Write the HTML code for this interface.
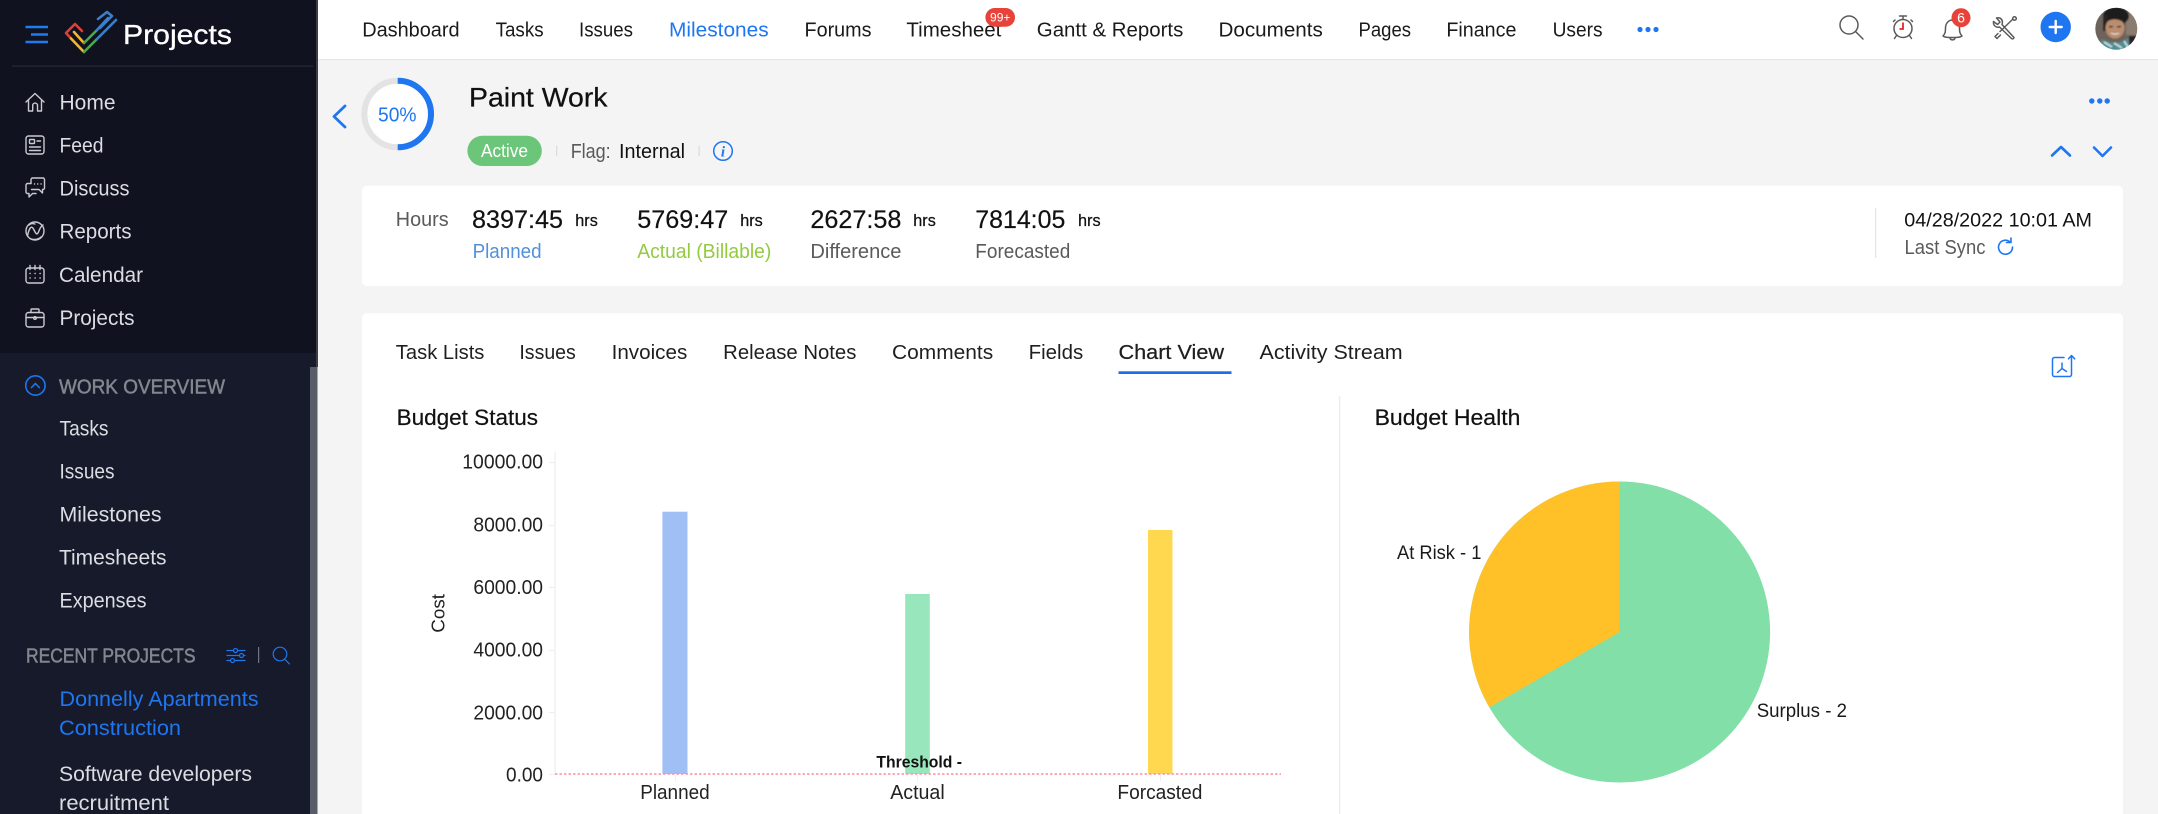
<!DOCTYPE html>
<html lang="en">
<head>
<meta charset="utf-8">
<title>Projects - Paint Work</title>
<style>
html,body{margin:0;padding:0;width:2158px;height:814px;overflow:hidden;background:#f4f4f4}
svg{display:block}
text{font-family:"Liberation Sans",sans-serif;white-space:pre}
.side{font-size:21px;fill:#dcdde2}
.sec{font-size:20px;fill:#84868f;stroke:#84868f;stroke-width:.5}
.nav{font-size:20px;fill:#1a1a1a}
.tab{font-size:20px;fill:#1f1f1f}
.num{font-size:25px;fill:#111;stroke:#111;stroke-width:.2}
.hrs{font-size:17px;fill:#111;stroke:#111;stroke-width:.25}
.lbl{font-size:20px;fill:#5a5a5a}
.ax{font-size:20px;fill:#222}
.h2{font-size:22px;fill:#111;stroke:#111;stroke-width:.2}
.ic{fill:none;stroke:#c9cad0;stroke-width:1.4;stroke-linecap:round;stroke-linejoin:round}
.bl{fill:none;stroke:#1e76f0;stroke-linecap:round;stroke-linejoin:round}
.gr{fill:none;stroke:#5a5a5a;stroke-width:1.5;stroke-linecap:round;stroke-linejoin:round}
</style>
</head>
<body>
<svg width="2158" height="814" viewBox="0 0 2158 814" xmlns="http://www.w3.org/2000/svg">
<defs>
<clipPath id="av"><circle cx="2116.3" cy="28.7" r="21"/></clipPath>
<filter id="soft" x="-10%" y="-10%" width="120%" height="120%"><feGaussianBlur stdDeviation=".9"/></filter>
</defs>
<rect width="2158" height="814" fill="#f4f4f4"/>

<!-- sidebar -->
<rect x="0" y="0" width="317" height="353" fill="#11121f"/>
<rect x="0" y="353" width="317" height="461" fill="#161a2b"/>
<rect x="12" y="65.5" width="301" height="1.2" fill="#2a2b37"/>
<rect x="316" y="0" width="2" height="367" fill="#3c3d48"/>
<rect x="310" y="367" width="7.5" height="447" fill="#585c68"/>

<!-- hamburger -->
<g stroke="#1e7cf0" stroke-width="2.6">
<line x1="25.5" y1="27" x2="48" y2="27"/>
<line x1="31" y1="34.5" x2="48" y2="34.5"/>
<line x1="25.5" y1="42" x2="48" y2="42"/>
</g>
<!-- logo -->
<g fill="none" stroke-width="2.6" stroke-linejoin="round" stroke-linecap="round">
<path d="M75 24 66 33 71 38.5M75 24 82 31" stroke="#d9413a"/>
<path d="M71 38.5 84 52M74 32 84 43" stroke="#f5b52c"/>
<path d="M84 52 97 39M84 43 97 30" stroke="#4aa84f"/>
<path d="M97 39 116 20M97 30 108 18M98 19 107 12 112 16 100 28" stroke="#3a7fc8"/>
</g>
<text x="123" y="44" font-size="28" fill="#fff" stroke="#fff" stroke-width=".3" textLength="109" lengthAdjust="spacingAndGlyphs">Projects</text>

<!-- sidebar icons -->
<g class="ic">
<path d="M26 102 35 93.5 44 102M28.5 100V111H32.7V105.5a2.4 2.4 0 0 1 4.8 0V111H41.5V100"/>
<rect x="26" y="136" width="18" height="18" rx="2.5"/>
<rect x="29.5" y="139.5" width="5" height="4" rx=".5"/>
<path d="M29.5 147H40.5M29.5 150.5H40.5M37 141H40.5"/>
<path d="M31 183.5V179.5a1.5 1.5 0 0 1 1.5-1.5H43a1.5 1.5 0 0 1 1.5 1.5V188a1.5 1.5 0 0 1-1.5 1.5h-.5V193l-3.5-3.5H31.5"/>
<path d="M31 183.5H27.5a1.5 1.5 0 0 0-1.5 1.5V192a1.5 1.5 0 0 0 1.5 1.5H29V197l3.5-3.5H36"/>
<path d="M34.5 184h.1M37.7 184h.1M41 184h.1"/>
<circle cx="35" cy="231" r="9"/>
<path d="M27.5 236C29 228 31.5 225 33.5 229S37 236 38.5 232 41 226 43 225M29 225C31 223 33 223.5 35 224M30 238.5C33 240 38 240 41 237"/>
<rect x="26" y="268" width="18" height="15" rx="2.5"/>
<path d="M30 265.5V269.5M35 265.5V269.5M40 265.5V269.5"/>
<path d="M30 273.5h.2M35 273.5h.2M40 273.5h.2M30 278h.2M35 278h.2M40 278h.2"/>
<rect x="26" y="312.5" width="18" height="14.5" rx="2.5"/>
<path d="M31 312.5V310a1 1 0 0 1 1-1h6a1 1 0 0 1 1 1v2.5M26 317.5H44"/>
<circle cx="35" cy="318" r="1.3"/>
</g>

<!-- sidebar text -->
<text class="side" x="59.5" y="109.5" textLength="56" lengthAdjust="spacingAndGlyphs">Home</text>
<text class="side" x="59.5" y="152.5" textLength="44" lengthAdjust="spacingAndGlyphs">Feed</text>
<text class="side" x="59.5" y="195.5" textLength="70" lengthAdjust="spacingAndGlyphs">Discuss</text>
<text class="side" x="59.5" y="238.5" textLength="72" lengthAdjust="spacingAndGlyphs">Reports</text>
<text class="side" x="59" y="281.8" textLength="84" lengthAdjust="spacingAndGlyphs">Calendar</text>
<text class="side" x="59.5" y="324.8" textLength="75" lengthAdjust="spacingAndGlyphs">Projects</text>

<circle cx="35.4" cy="385.5" r="9.7" fill="none" stroke="#1e76f0" stroke-width="1.6"/>
<path class="bl" stroke-width="1.6" d="M31.5 387.5 35.4 383.5 39.3 387.5"/>
<text class="sec" x="59" y="393.5" textLength="166" lengthAdjust="spacingAndGlyphs">WORK OVERVIEW</text>

<text class="side" x="59.5" y="435.5" textLength="49" lengthAdjust="spacingAndGlyphs">Tasks</text>
<text class="side" x="59.5" y="478.5" textLength="55" lengthAdjust="spacingAndGlyphs">Issues</text>
<text class="side" x="59.5" y="521.5" textLength="102" lengthAdjust="spacingAndGlyphs">Milestones</text>
<text class="side" x="59" y="564.5" textLength="107.5" lengthAdjust="spacingAndGlyphs">Timesheets</text>
<text class="side" x="59.5" y="607.5" textLength="87" lengthAdjust="spacingAndGlyphs">Expenses</text>

<text class="sec" x="26" y="662.5" textLength="169.5" lengthAdjust="spacingAndGlyphs">RECENT PROJECTS</text>
<g class="bl" stroke-width="1.2">
<path d="M227 650.5H233M238 650.5H245M227 655.5H239M244 655.5H245M227 660.5H230M235 660.5H245"/>
<circle cx="235.5" cy="650.5" r="2"/>
<circle cx="241.5" cy="655.5" r="2"/>
<circle cx="232.5" cy="660.5" r="2"/>
<circle cx="280" cy="654" r="6.8"/>
<path d="M285 659.5 289.5 664"/>
</g>
<rect x="258" y="647" width="1.2" height="16" fill="#6f7480"/>

<text class="side" x="59.5" y="706.2" style="fill:#1e76f0" textLength="199" lengthAdjust="spacingAndGlyphs">Donnelly Apartments</text>
<text class="side" x="59" y="735.2" style="fill:#1e76f0" textLength="122" lengthAdjust="spacingAndGlyphs">Construction</text>
<text class="side" x="59" y="781.2" textLength="193" lengthAdjust="spacingAndGlyphs">Software developers</text>
<text class="side" x="59" y="810.2" textLength="110" lengthAdjust="spacingAndGlyphs">recruitment</text>

<!-- header -->
<rect x="318" y="0" width="1840" height="59" fill="#fff"/>
<rect x="318" y="59" width="1840" height="1.2" fill="#e6e6e6"/>
<text class="nav" x="362.2" y="36.7" textLength="97.4" lengthAdjust="spacingAndGlyphs">Dashboard</text>
<text class="nav" x="495.6" y="36.7" textLength="48" lengthAdjust="spacingAndGlyphs">Tasks</text>
<text class="nav" x="579" y="36.7" textLength="54" lengthAdjust="spacingAndGlyphs">Issues</text>
<text class="nav" x="669" y="36.7" style="fill:#1e76f0" textLength="99.7" lengthAdjust="spacingAndGlyphs">Milestones</text>
<text class="nav" x="804.5" y="36.7" textLength="67" lengthAdjust="spacingAndGlyphs">Forums</text>
<text class="nav" x="906.4" y="36.7" textLength="95" lengthAdjust="spacingAndGlyphs">Timesheet</text>
<text class="nav" x="1036.8" y="36.7" textLength="146.5" lengthAdjust="spacingAndGlyphs">Gantt &amp; Reports</text>
<text class="nav" x="1218.5" y="36.7" textLength="104.3" lengthAdjust="spacingAndGlyphs">Documents</text>
<text class="nav" x="1358.5" y="36.7" textLength="52.5" lengthAdjust="spacingAndGlyphs">Pages</text>
<text class="nav" x="1446.4" y="36.7" textLength="70" lengthAdjust="spacingAndGlyphs">Finance</text>
<text class="nav" x="1552.6" y="36.7" textLength="50" lengthAdjust="spacingAndGlyphs">Users</text>
<g fill="#1e76f0"><circle cx="1640" cy="29.5" r="2.6"/><circle cx="1648" cy="29.5" r="2.6"/><circle cx="1656" cy="29.5" r="2.6"/></g>
<rect x="985.4" y="8" width="29.6" height="18.7" rx="9.3" fill="#e8433a"/>
<text x="1000.2" y="21.5" font-size="12" fill="#fff" text-anchor="middle">99+</text>

<!-- header icons -->
<g class="gr">
<circle cx="1849" cy="25" r="9"/>
<path d="M1855.5 31.5 1863 39"/>
<circle cx="1903" cy="28.5" r="9"/>
<path d="M1903 19.5V16.5M1899.5 16H1906.5M1895 20 1893.5 21.5M1911 20 1912.5 21.5M1896.5 35.5 1894.5 38.5M1909.5 35.5 1911.5 38.5"/>
<path d="M1950 37.5C1945 37.5 1943 36 1943 36C1945.5 33.5 1945.5 31 1945.5 28C1945.5 23.5 1948.5 20 1952.5 20S1959.5 23.5 1959.5 28C1959.5 31 1959.5 33.5 1962 36C1962 36 1960 37.5 1955 37.5Z"/>
<path d="M1950 38a2.6 2.6 0 0 0 5 0"/>
<path d="M2002 24.5 2014 37.5a1.5 1.5 0 0 1-2.5 1L1999.5 27C1996 28 1993 25.5 1993.5 21.5L1997.5 24.5 2000 22 1996.5 18C2000.5 17 2003.5 20 2002 24.5Z"/>
<path d="M2013 19 2000 31.5M1998 33.5 1995 36.5l2 2 3.5-3.5"/>
<circle cx="2014.5" cy="18.5" r="1.8"/>
</g>
<path d="M1903 22.5V29H1899.5" fill="none" stroke="#e8262a" stroke-width="1.8"/>
<circle cx="1961" cy="17.7" r="9.5" fill="#e8433a"/>
<text x="1961" y="22.7" font-size="14" fill="#fff" text-anchor="middle">6</text>
<circle cx="2055.7" cy="27" r="15.2" fill="#1e76f0"/>
<path d="M2055.7 21V33M2049.7 27H2061.7" stroke="#fff" stroke-width="2.4" stroke-linecap="round"/>
<!-- avatar -->
<g clip-path="url(#av)">
<g filter="url(#soft)">
<rect x="2093" y="5" width="47" height="47" fill="#6d635c"/>
<rect x="2126" y="5" width="14" height="30" fill="#8a7c6e"/>
<ellipse cx="2116" cy="16" rx="13" ry="9" fill="#1f1b1a"/>
<rect x="2103" y="15" width="6" height="16" fill="#2a2422"/>
<ellipse cx="2115" cy="28" rx="9.5" ry="10.5" fill="#b98d6e"/>
<path d="M2106 23C2110 18 2120 18 2125 24L2124 15 2108 14Z" fill="#1f1b1a"/>
<rect x="2109" y="26" width="4" height="1.4" fill="#2a1f1a"/>
<rect x="2117" y="26" width="4" height="1.4" fill="#2a1f1a"/>
<path d="M2111 33C2113 34.5 2117 34.5 2119 33" stroke="#eee" stroke-width="1" fill="none"/>
<path d="M2098 52 2102 39C2108 43 2120 45 2128 38L2134 52Z" fill="#4f8d93"/>
<path d="M2104 42 2112 47M2114 43 2122 48M2124 41 2128 47" stroke="#cfe3e3" stroke-width="1.8" fill="none"/>
<rect x="2129" y="36" width="11" height="16" fill="#2a2220"/>
</g>
</g>

<!-- title row -->
<path class="bl" stroke-width="2.8" d="M345 106 334 116.5 345 127"/>
<circle cx="397.7" cy="114" r="33.3" fill="#fff" stroke="#e3e3e3" stroke-width="6"/>
<path d="M397.7 80.7A33.3 33.3 0 0 1 397.7 147.3" fill="none" stroke="#1e76f0" stroke-width="6"/>
<text x="378" y="121.5" font-size="20" fill="#1e76f0" textLength="38.5" lengthAdjust="spacingAndGlyphs">50%</text>
<text x="469" y="106.7" font-size="27" fill="#111" stroke="#111" stroke-width=".25" textLength="138.5" lengthAdjust="spacingAndGlyphs">Paint Work</text>
<rect x="467.4" y="135.7" width="74.4" height="30.3" rx="15.1" fill="#6cc679"/>
<text x="481" y="157" font-size="18" fill="#fff" textLength="47" lengthAdjust="spacingAndGlyphs">Active</text>
<rect x="556" y="146" width="1.3" height="10" fill="#dcdcdc"/>
<text x="570.7" y="158.2" class="lbl" textLength="40" lengthAdjust="spacingAndGlyphs">Flag:</text>
<text x="619" y="158.2" font-size="20" fill="#111" textLength="66" lengthAdjust="spacingAndGlyphs">Internal</text>
<rect x="698.5" y="146" width="1.3" height="10" fill="#dcdcdc"/>
<circle cx="723" cy="151" r="9.3" fill="none" stroke="#1e76f0" stroke-width="1.5"/>
<text x="723" y="156.5" font-size="15" font-weight="bold" font-style="italic" fill="#1e76f0" text-anchor="middle" style="font-family:'Liberation Serif',serif">i</text>
<g fill="#1e76f0"><circle cx="2091.8" cy="101" r="2.7"/><circle cx="2099.8" cy="101" r="2.7"/><circle cx="2107.2" cy="101" r="2.7"/></g>
<path class="bl" stroke-width="2.6" d="M2052 155.5 2061 147 2070 155.5M2094 147.5 2102.5 156 2111 147.5"/>

<!-- hours card -->
<rect x="362" y="185.7" width="1761" height="100.3" rx="5" fill="#fff"/>
<text x="395.8" y="226.2" class="lbl" textLength="52.8" lengthAdjust="spacingAndGlyphs">Hours</text>
<text x="472" y="228" class="num" textLength="91" lengthAdjust="spacingAndGlyphs">8397:45</text>
<text x="575.3" y="226.2" class="hrs" textLength="22.5" lengthAdjust="spacingAndGlyphs">hrs</text>
<text x="472.6" y="257.8" font-size="20" fill="#5090dd" textLength="69" lengthAdjust="spacingAndGlyphs">Planned</text>
<text x="637.3" y="228" class="num" textLength="91" lengthAdjust="spacingAndGlyphs">5769:47</text>
<text x="740.2" y="226.2" class="hrs" textLength="22.5" lengthAdjust="spacingAndGlyphs">hrs</text>
<text x="637.3" y="257.8" font-size="20" fill="#92cb3e" textLength="134" lengthAdjust="spacingAndGlyphs">Actual (Billable)</text>
<text x="810.4" y="228" class="num" textLength="91" lengthAdjust="spacingAndGlyphs">2627:58</text>
<text x="913.3" y="226.2" class="hrs" textLength="22.5" lengthAdjust="spacingAndGlyphs">hrs</text>
<text x="810.4" y="257.8" class="lbl" textLength="91" lengthAdjust="spacingAndGlyphs">Difference</text>
<text x="975.3" y="228" class="num" textLength="90" lengthAdjust="spacingAndGlyphs">7814:05</text>
<text x="1078" y="226.2" class="hrs" textLength="22.6" lengthAdjust="spacingAndGlyphs">hrs</text>
<text x="975.3" y="257.8" class="lbl" textLength="95" lengthAdjust="spacingAndGlyphs">Forecasted</text>
<rect x="1875" y="208" width="1.2" height="50" fill="#e4e4e4"/>
<text x="1904.3" y="226.5" font-size="19.5" fill="#111" textLength="187.7" lengthAdjust="spacingAndGlyphs">04/28/2022 10:01 AM</text>
<text x="1904.5" y="254" class="lbl" textLength="81" lengthAdjust="spacingAndGlyphs">Last Sync</text>
<path class="bl" stroke-width="1.6" d="M2009.5 241.5A7 7 0 1 0 2012.5 247M2011 238V242.5H2006.5"/>

<!-- main card -->
<rect x="362" y="313.3" width="1761" height="510" rx="5" fill="#fff"/>
<text class="tab" x="395.8" y="359.2" textLength="88.6" lengthAdjust="spacingAndGlyphs">Task Lists</text>
<text class="tab" x="519.4" y="359.2" textLength="56.4" lengthAdjust="spacingAndGlyphs">Issues</text>
<text class="tab" x="611.6" y="359.2" textLength="75.7" lengthAdjust="spacingAndGlyphs">Invoices</text>
<text class="tab" x="723.2" y="359.2" textLength="133.2" lengthAdjust="spacingAndGlyphs">Release Notes</text>
<text class="tab" x="892" y="359.2" textLength="101.2" lengthAdjust="spacingAndGlyphs">Comments</text>
<text class="tab" x="1028.6" y="359.2" textLength="54.6" lengthAdjust="spacingAndGlyphs">Fields</text>
<text class="tab" x="1118.5" y="359.2" style="stroke:#1f1f1f;stroke-width:.25" textLength="105.5" lengthAdjust="spacingAndGlyphs">Chart View</text>
<text class="tab" x="1259.5" y="359.2" textLength="143.2" lengthAdjust="spacingAndGlyphs">Activity Stream</text>
<rect x="1118.5" y="371.3" width="113" height="2.7" fill="#1a6fe8"/>
<!-- export pdf -->
<g class="bl" stroke-width="1.5">
<path d="M2064 357.5H2054.5a2 2 0 0 0-2 2V374.5a2 2 0 0 0 2 2H2069.5a2 2 0 0 0 2-2V356"/>
<path d="M2068.5 358.8 2071.5 355.5 2074.7 358.8"/>
<path d="M2062 363V368.5M2062 368.5 2057.5 372.5M2062 368.5 2066.5 371.5"/>
</g>

<!-- divider -->
<rect x="1339" y="396" width="1.2" height="418" fill="#ececec"/>

<!-- bar chart -->
<text class="h2" x="396.6" y="425" textLength="141.4" lengthAdjust="spacingAndGlyphs">Budget Status</text>
<text class="h2" x="1374.6" y="425" textLength="145.8" lengthAdjust="spacingAndGlyphs">Budget Health</text>
<rect x="554.5" y="452" width="1.2" height="323" fill="#eeeeee"/>
<g fill="#eeeeee">
<rect x="549" y="462" width="6" height="1"/><rect x="549" y="525" width="6" height="1"/><rect x="549" y="587" width="6" height="1"/><rect x="549" y="650" width="6" height="1"/><rect x="549" y="712" width="6" height="1"/><rect x="549" y="774" width="6" height="1"/>
<rect x="675" y="775" width="1" height="6"/><rect x="917" y="775" width="1" height="6"/><rect x="1160" y="775" width="1" height="6"/>
</g>
<g class="ax" text-anchor="end">
<text x="543" y="468.6" textLength="80.7" lengthAdjust="spacingAndGlyphs">10000.00</text>
<text x="543" y="531.3" textLength="69.6" lengthAdjust="spacingAndGlyphs">8000.00</text>
<text x="543" y="594" textLength="69.6" lengthAdjust="spacingAndGlyphs">6000.00</text>
<text x="543" y="656.6" textLength="69.6" lengthAdjust="spacingAndGlyphs">4000.00</text>
<text x="543" y="719.3" textLength="69.6" lengthAdjust="spacingAndGlyphs">2000.00</text>
<text x="543" y="781.3" textLength="37" lengthAdjust="spacingAndGlyphs">0.00</text>
</g>
<text transform="translate(444.5 632.7) rotate(-90)" font-size="18" fill="#222" textLength="38.7" lengthAdjust="spacingAndGlyphs">Cost</text>
<rect x="662.4" y="511.7" width="25.1" height="262.3" fill="#a0bff5"/>
<rect x="905.2" y="594" width="24.6" height="180" fill="#98e6bb"/>
<rect x="1148" y="530" width="24.5" height="244" fill="#ffd84f"/>
<line x1="555" y1="774" x2="1281" y2="774" stroke="#ff8fa0" stroke-width="1.4" stroke-dasharray="2.5 2"/>
<text x="876.4" y="767.7" font-size="17" font-weight="bold" fill="#111" textLength="85.6" lengthAdjust="spacingAndGlyphs">Threshold -</text>
<text class="ax" x="640.2" y="799" textLength="69.5" lengthAdjust="spacingAndGlyphs">Planned</text>
<text class="ax" x="890.2" y="799" textLength="54.5" lengthAdjust="spacingAndGlyphs">Actual</text>
<text class="ax" x="1117.4" y="799" textLength="85" lengthAdjust="spacingAndGlyphs">Forcasted</text>

<!-- pie -->
<circle cx="1619.6" cy="632" r="150.5" fill="#82dfa8"/>
<path d="M1619.6 632 1489.3 707.25A150.5 150.5 0 0 1 1619.6 481.5Z" fill="#ffc127"/>
<text x="1397" y="559" font-size="19" fill="#1a1a1a" textLength="84.4" lengthAdjust="spacingAndGlyphs">At Risk - 1</text>
<text x="1756.7" y="717" font-size="19" fill="#1a1a1a" textLength="90.3" lengthAdjust="spacingAndGlyphs">Surplus - 2</text>
</svg>
</body>
</html>
